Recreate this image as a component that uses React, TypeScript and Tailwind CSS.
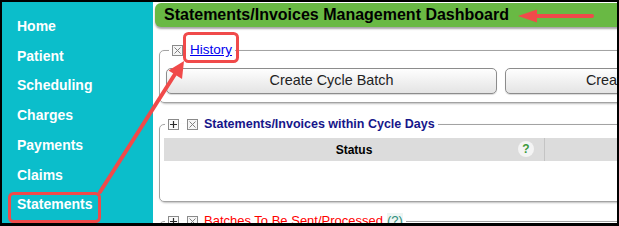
import type { ReactNode } from "react";

const menu = ["Home", "Patient", "Scheduling", "Charges", "Payments", "Claims", "Statements"];

function XBox() {
  return (
    <svg width="11" height="11" viewBox="0 0 11 11" className="block shrink-0">
      <rect x="0.5" y="0.5" width="10" height="10" fill="#f6f6f6" stroke="#8a8a8a" />
      <path d="M2.5 2.5 L8.5 8.5 M8.5 2.5 L2.5 8.5" stroke="#808080" strokeWidth="1" />
    </svg>
  );
}

function PlusBox() {
  return (
    <svg width="11" height="11" viewBox="0 0 11 11" className="block shrink-0">
      <rect x="0.5" y="0.5" width="10" height="10" fill="#fafafa" stroke="#8a8a8a" />
      <path d="M5.5 2 V9 M2 5.5 H9" stroke="#2b2b2b" strokeWidth="1.2" />
    </svg>
  );
}

function Panel({ legend, className, children }: { legend: ReactNode; className?: string; children?: ReactNode }) {
  return (
    <fieldset
      className={`w-[720px] rounded-[5px] border border-[#a3a3a3] shadow-[1px_1px_2px_rgba(0,0,0,0.25)] ${className ?? ""}`}
    >
      {legend}
      {children}
    </fieldset>
  );
}

function Btn({ label, w }: { label: string; w: string }) {
  return (
    <button
      className={`${w} h-[26px] shrink-0 rounded-[5px] border border-[#8c8c8c] bg-gradient-to-b from-[#fefefe] to-[#e4e4e4] text-[14.4px] text-[#222] shadow-[0_1px_1px_rgba(0,0,0,0.15)]`}
    >
      {label}
    </button>
  );
}

export default function App() {
  return (
    <div className="relative w-[619px] h-[226px] bg-black pt-[2px] pl-[2px] pr-[2px] pb-[3px] font-['Liberation_Sans',Arial,sans-serif]">
      <div className="flex h-full">
        {/* left nav */}
        <div className="w-[151px] shrink-0 bg-[#0bbecb] pt-[10px] pl-[15px]">
          {menu.map((m) => (
            <div key={m} className="leading-[29.7px] text-[14px] font-bold text-white">
              {m}
            </div>
          ))}
        </div>

        {/* main */}
        <div className="flex-1 bg-white overflow-hidden">
          <div className="ml-[2px] mt-[1px] h-[24px] w-[700px] rounded-l-[6px] bg-[#69b944] pl-[9px] flex items-center shadow-[0_2px_2px_rgba(0,0,0,0.35)]">
            <span className="text-[16px] font-bold text-black">Statements/Invoices Management Dashboard</span>
          </div>

          <Panel
            className="ml-[6px] mt-[15px] pt-[10px] pb-[8px] pl-[6px]"
            legend={
              <legend className="ml-[3px] px-[3px] leading-[16px] flex items-center gap-[7px]">
                <XBox />
                <a href="#" className="text-[13.5px] text-[#0000ee] underline">History</a>
              </legend>
            }
          >
            <div className="flex gap-[8px]">
              <Btn label="Create Cycle Batch" w="w-[331px]" />
              <Btn label="Create Non-Cycle Batch" w="w-[317px]" />
            </div>
          </Panel>

          <Panel
            className="ml-[6px] mt-[13px] pt-[6px] pb-[4px] pl-[4px]"
            legend={
              <legend className="ml-[1px] px-[3px] leading-[16px] flex items-center">
                <PlusBox />
                <span className="ml-[8px]"><XBox /></span>
                <span className="ml-[6px] text-[12.5px] font-bold text-[#16168a]">Statements/Invoices within Cycle Days</span>
              </legend>
            }
          >
            <div className="flex h-[23px] bg-[#dcdcdc]">
              <div className="relative w-[381px] flex items-center justify-center border-r border-[#c4c4c4]">
                <span className="text-[12px] font-bold text-black">Status</span>
                <span className="absolute right-[10px] top-[3px] w-[16px] h-[16px] rounded-full bg-[#f4f4f4] flex items-center justify-center text-[12px] font-bold text-[#3c9a3c]">
                  ?
                </span>
              </div>
              <div className="flex-1" />
            </div>
            <div className="h-[36px]" />
          </Panel>

          <Panel
            className="ml-[6px] mt-[11px] pt-[6px] pb-[4px] pl-[4px]"
            legend={
              <legend className="ml-[1px] px-[3px] leading-[16px] flex items-center">
                <PlusBox />
                <span className="ml-[8px]"><XBox /></span>
                <span className="ml-[6px] text-[13px] text-[#ff0000]">Batches To Be Sent/Processed</span>
                <span className="ml-[4px] text-[13px] text-[#2f8f7a] bg-[#eef6f4]">(?)</span>
              </legend>
            }
          >
            <div className="h-[30px]" />
          </Panel>
        </div>
      </div>

      {/* annotations */}
      <svg className="absolute inset-0 pointer-events-none" width="619" height="226" viewBox="0 0 619 226">
        <g stroke="#f04a4a" fill="none" strokeWidth="3">
          <rect x="184.5" y="33.5" width="53" height="28" rx="4" />
          <rect x="9.5" y="193.5" width="90" height="28" rx="4" />
        </g>
        <g stroke="#f04a4a" strokeWidth="4" strokeLinecap="round">
          <line x1="592" y1="16" x2="532" y2="16" />
          <line x1="100" y1="192" x2="177" y2="71" />
        </g>
        <g fill="#f04a4a">
          <polygon points="518,16 537,9.5 537,22.5" />
          <polygon points="184,61 182,79 168.5,70.5" />
        </g>
      </svg>
    </div>
  );
}
